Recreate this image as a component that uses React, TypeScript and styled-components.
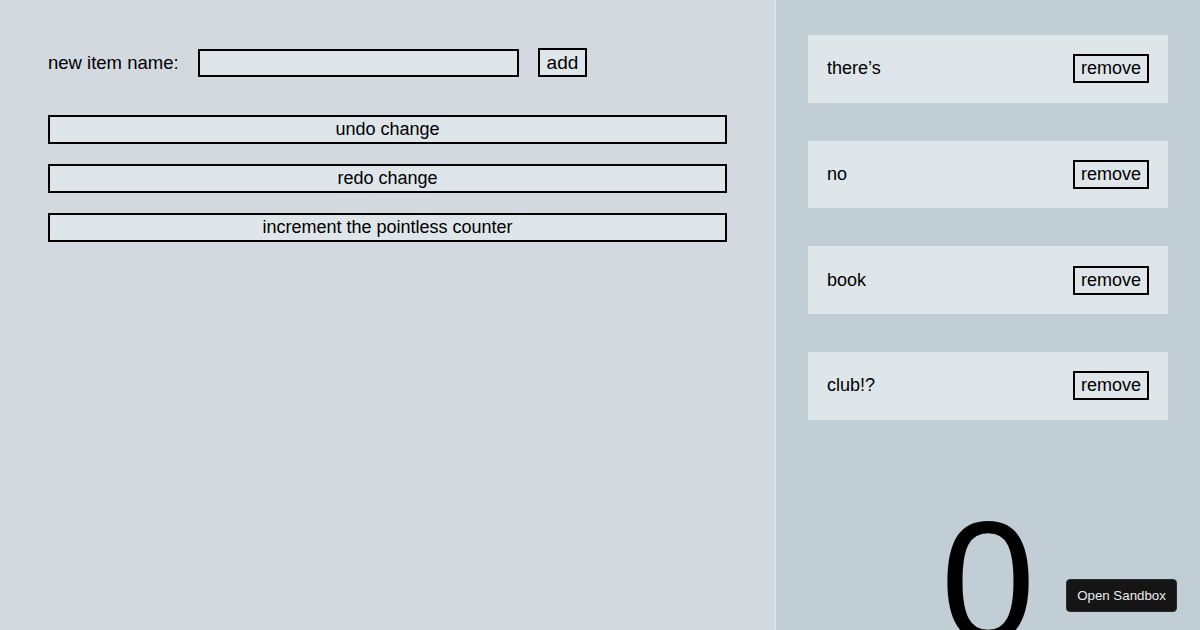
import styled, { createGlobalStyle } from 'styled-components';
import { useState } from 'react';

const GlobalStyle = createGlobalStyle`
  html, body {
    margin: 0;
    padding: 0;
    height: 100%;
    overflow: hidden;
  }

  body {
    font-family: 'Liberation Sans', Arial, sans-serif;
    font-size: 18px;
    color: #000;
    background: #d2dae0;
  }
`;

const initialItems = ['there’s', 'no', 'book', 'club!?'];

export default function App() {
  const [items, setItems] = useState<string[]>(initialItems);
  const [name, setName] = useState('');
  const [counter, setCounter] = useState(0);

  return (
    <>
      <GlobalStyle />
      <Page>
        <Controls>
          <AddRow>
            <Label htmlFor="new-item">new item name:</Label>
            <NameInput
              id="new-item"
              value={name}
              onChange={(event) => setName(event.currentTarget.value)}
            />
            <SmallButton
              $wide
              onClick={() => {
                if (!name) return;
                setItems([...items, name]);
                setName('');
              }}
            >
              add
            </SmallButton>
          </AddRow>
          <ActionList>
            <WideButton>undo change</WideButton>
            <WideButton>redo change</WideButton>
            <WideButton onClick={() => setCounter(counter + 1)}>
              increment the pointless counter
            </WideButton>
          </ActionList>
        </Controls>
        <Sidebar>
          <ItemList>
            {items.map((item, index) => (
              <ItemCard key={item + index}>
                <span>{item}</span>
                <SmallButton
                  onClick={() => setItems(items.filter((_, i) => i !== index))}
                >
                  remove
                </SmallButton>
              </ItemCard>
            ))}
          </ItemList>
          <Counter>{counter}</Counter>
        </Sidebar>
      </Page>
      <SandboxButton>Open Sandbox</SandboxButton>
    </>
  );
}

const Page = styled.div`
  display: grid;
  grid-template-columns: 775px 1fr;
  height: 630px;
  overflow: hidden;
`;

const Controls = styled.div`
  padding: 48px;
  background: #d2dae0;
`;

const AddRow = styled.div`
  display: flex;
  align-items: center;
  gap: 19px;
`;

const Label = styled.label`
  font-size: 18.5px;
  line-height: 28px;
`;

const NameInput = styled.input`
  box-sizing: border-box;
  width: 321px;
  height: 28px;
  margin: 0;
  padding: 0 6px;
  border: 2px solid #000;
  border-radius: 0;
  background: #dfe6e9;
  font-family: inherit;
  font-size: 18px;
  outline: none;
`;

const SmallButton = styled.button<{ $wide?: boolean }>`
  box-sizing: border-box;
  height: 29px;
  margin: 0;
  padding: 0 ${(p) => (p.$wide ? '7px' : '6px')};
  border: 2px solid #000;
  border-radius: 0;
  background: #dfe6e9;
  color: #000;
  font-family: inherit;
  font-size: ${(p) => (p.$wide ? '19px' : '18px')};
  cursor: pointer;
`;

const ActionList = styled.div`
  display: flex;
  flex-direction: column;
  gap: 20.5px;
  margin-top: 38px;
`;

const WideButton = styled(SmallButton)`
  width: 100%;
  height: 28.5px;
`;

const Sidebar = styled.div`
  box-sizing: border-box;
  padding: 35px 32px 0;
  border-left: 1px solid #dfe6e9;
  background: #c2ced6;
  display: flex;
  flex-direction: column;
  align-items: center;
`;

const ItemList = styled.div`
  display: flex;
  flex-direction: column;
  gap: 38px;
  width: 100%;
`;

const ItemCard = styled.div`
  box-sizing: border-box;
  display: flex;
  align-items: center;
  justify-content: space-between;
  height: 67.67px;
  padding: 0 19px;
  background: #dfe6e9;
  font-size: 18px;
`;

const Counter = styled.div`
  margin-top: 63px;
  font-size: 170px;
  line-height: normal;
`;

const SandboxButton = styled.button`
  position: fixed;
  right: 23px;
  bottom: 18px;
  box-sizing: border-box;
  width: 111px;
  height: 33px;
  padding: 0;
  border: 1px solid #2a2a2a;
  border-radius: 4px;
  background: #151515;
  color: #ececec;
  font-family: 'Liberation Sans', Arial, sans-serif;
  font-size: 13.3px;
  cursor: pointer;
`;
